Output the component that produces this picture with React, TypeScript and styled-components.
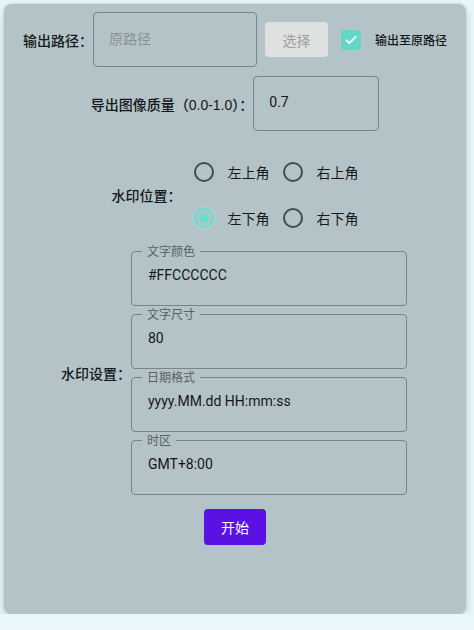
import styled, { createGlobalStyle } from 'styled-components';

const GlobalStyle = createGlobalStyle`
  html, body {
    margin: 0;
    padding: 0;
    background: #e9f7fa;
  }
  body {
    font-family: 'Liberation Sans', 'Noto Sans CJK SC', sans-serif;
    color: #161a1c;
  }
`;

const CARD_BG = '#b4c3c7';

const Card = styled.div`
  box-sizing: border-box;
  margin: 4px 0 0 4px;
  width: 462px;
  height: 610px;
  padding-top: 8px;
  background: ${CARD_BG};
  border-radius: 8px;
  box-shadow: 0 3px 8px rgba(90, 120, 130, 0.35), 0 0 2px rgba(90, 120, 130, 0.25);
  display: flex;
  flex-direction: column;
  align-items: center;
`;

const Row = styled.div<{ $mt?: number }>`
  display: flex;
  align-items: center;
  justify-content: center;
  margin-top: ${(p) => p.$mt ?? 0}px;
`;

const Label = styled.span<{ $size?: number }>`
  font-size: ${(p) => p.$size ?? 14}px;
  font-weight: 500;
  white-space: nowrap;
  color: #15191b;
`;

const Input = styled.div<{ $w: number; $placeholder?: boolean }>`
  box-sizing: border-box;
  width: ${(p) => p.$w}px;
  height: 55px;
  padding: 0 15px 4px;
  display: flex;
  align-items: center;
  border: 1px solid #78858a;
  border-radius: 4px;
  font-family: Roboto, 'Noto Sans CJK SC', sans-serif;
  font-size: 14px;
  color: ${(p) => (p.$placeholder ? '#87929a' : '#141719')};
`;

const GreyButton = styled.button`
  box-sizing: border-box;
  margin-left: 8px;
  width: 63px;
  height: 35px;
  border: none;
  border-radius: 4px;
  background: #dfe1e1;
  color: #9c9fa0;
  font-family: 'Noto Sans CJK SC', sans-serif;
  font-size: 14px;
  padding: 0;
`;

const CheckBox = styled.span`
  box-sizing: border-box;
  margin-left: 13px;
  margin-right: 14px;
  width: 20px;
  height: 20px;
  border-radius: 2px;
  background: #62d8c5;
  display: flex;
  align-items: center;
  justify-content: center;
`;

const RadioBlock = styled.div`
  display: flex;
  align-items: center;
  margin-top: 18px;
`;

const RadioGrid = styled.div`
  margin-left: 12px;
  display: grid;
  grid-template-columns: auto auto;
  column-gap: 13px;
`;

const RadioItem = styled.label`
  height: 46px;
  display: flex;
  align-items: center;
  gap: 14px;
  font-family: 'Noto Sans CJK SC', sans-serif;
  font-size: 14px;
  color: #15191b;
`;

const Circle = styled.span<{ $checked?: boolean }>`
  box-sizing: border-box;
  width: 20px;
  height: 20px;
  border-radius: 50%;
  border: 2px solid ${(p) => (p.$checked ? '#6edccb' : '#424c50')};
  display: flex;
  align-items: center;
  justify-content: center;
  box-shadow: ${(p) => (p.$checked ? '0 0 0 2px rgba(150, 225, 215, 0.45)' : 'none')};
  &::after {
    content: '';
    display: ${(p) => (p.$checked ? 'block' : 'none')};
    width: 10px;
    height: 10px;
    border-radius: 50%;
    background: #6edccb;
  }
`;

const Settings = styled.div`
  display: flex;
  align-items: center;
  margin-top: 10px;
  margin-right: 2px;
`;

const FieldList = styled.div`
  display: flex;
  flex-direction: column;
  gap: 8px;
`;

const Field = styled.div`
  position: relative;
  box-sizing: border-box;
  width: 276px;
  height: 55px;
  padding: 15px 16px 0;
  border: 1px solid #78858a;
  border-radius: 4px;
  font-family: Roboto, 'Noto Sans CJK SC', sans-serif;
  font-size: 14px;
  line-height: 16px;
  color: #141719;
`;

const Legend = styled.span`
  position: absolute;
  top: -9px;
  left: 10px;
  padding: 0 5px;
  background: ${CARD_BG};
  font-family: 'Noto Sans CJK SC', sans-serif;
  font-size: 12px;
  line-height: 16px;
  color: #566166;
`;

const StartButton = styled.button`
  margin-top: 14px;
  width: 62px;
  height: 36px;
  border: none;
  border-radius: 4px;
  background: #5a12e4;
  color: #fff;
  font-family: 'Noto Sans CJK SC', sans-serif;
  font-size: 14px;
  padding: 0;
`;

const fields = [
  { label: '文字颜色', value: '#FFCCCCCC' },
  { label: '文字尺寸', value: '80' },
  { label: '日期格式', value: 'yyyy.MM.dd HH:mm:ss' },
  { label: '时区', value: 'GMT+8:00' },
];

const positions = [
  { text: '左上角', checked: false },
  { text: '右上角', checked: false },
  { text: '左下角', checked: true },
  { text: '右下角', checked: false },
];

const App = () => {
  return (
    <>
      <GlobalStyle />
      <Card>
        <Row>
          <Label>输出路径：</Label>
          <Input $w={164} $placeholder>
            原路径
          </Input>
          <GreyButton>选择</GreyButton>
          <CheckBox>
            <svg width="14" height="14" viewBox="0 0 24 24">
              <path d="M4 12.5l5 5L20 6.5" fill="none" stroke="#fff" strokeWidth="3" strokeLinecap="round" strokeLinejoin="round" />
            </svg>
          </CheckBox>
          <Label $size={12}>输出至原路径</Label>
        </Row>

        <Row $mt={9}>
          <Label>导出图像质量（0.0-1.0）：</Label>
          <Input $w={126}>0.7</Input>
        </Row>

        <RadioBlock>
          <Label>水印位置：</Label>
          <RadioGrid>
            {positions.map((p) => (
              <RadioItem key={p.text}>
                <Circle $checked={p.checked} />
                {p.text}
              </RadioItem>
            ))}
          </RadioGrid>
        </RadioBlock>

        <Settings>
          <Label>水印设置：</Label>
          <FieldList>
            {fields.map((f) => (
              <Field key={f.label}>
                <Legend>{f.label}</Legend>
                {f.value}
              </Field>
            ))}
          </FieldList>
        </Settings>

        <StartButton>开始</StartButton>
      </Card>
    </>
  );
};

export default App;
